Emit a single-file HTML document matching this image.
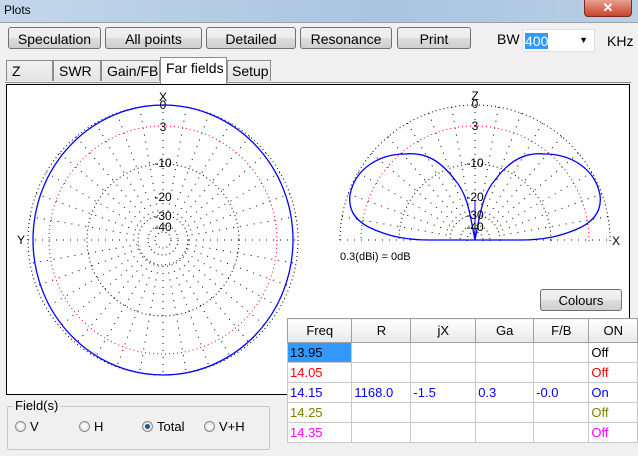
<!DOCTYPE html>
<html><head><style>
body{margin:0;width:638px;height:455px;overflow:hidden;background:#f0f0f0;font-family:"Liberation Sans",sans-serif;font-size:13px;position:relative}
.tb{position:absolute;left:0;top:0;width:638px;height:22px;background:linear-gradient(90deg,#c4d6ea,#a9c4e0 60%,#b9cfe6);}
.abs{position:absolute}
.btn{position:absolute;top:27px;height:22px;border:1px solid #707070;border-radius:3px;background:linear-gradient(#f2f2f2,#ebebeb 50%,#dddddd 50%,#cfcfcf);text-align:center;line-height:22px;font-size:14px;color:#000;box-sizing:border-box}
.tab{position:absolute;top:60px;height:21px;border:1px solid #898c95;border-bottom:none;background:linear-gradient(#f2f2f2,#e3e3e3);font-size:14px;line-height:20px;box-sizing:border-box;padding-left:5px}
table{border-collapse:collapse;position:absolute;left:287px;top:318px;background:#fff;font-size:13px}
td{border:1px solid #c8c8c8;height:20px;padding:0 0 0 2px;box-sizing:border-box}
th{border:1px solid #a0a0a0;font-weight:normal;background:linear-gradient(#fff,#e8e8e8);height:21px;font-size:13px}
.rad{position:absolute;top:421px;width:11px;height:11px;border-radius:50%;border:1px solid #8a8a8a;background:radial-gradient(#fff,#d8d8d8);box-sizing:border-box}
</style></head><body>
<div class="tb"></div>
<div class="abs" style="left:4px;top:3px;font-size:12px">Plots</div>
<div class="abs" style="left:584px;top:0;width:46px;height:16px;background:linear-gradient(#e8a090,#c8442c);border:1px solid #7a2a20;border-top:none;border-radius:0 0 4px 4px;color:#fff;text-align:center;font-weight:bold;line-height:15px">✕</div>
<div class="abs" style="left:0;top:22px;width:638px;height:433px;background:#f0f0f0;border-top:1px solid #a0a0a0"></div>
<div class="btn" style="left:8px;width:93px">Speculation</div>
<div class="btn" style="left:105px;width:97px">All points</div>
<div class="btn" style="left:206px;width:90px">Detailed</div>
<div class="btn" style="left:300px;width:92px">Resonance</div>
<div class="btn" style="left:397px;width:74px">Print</div>
<div class="abs" style="left:497px;top:31px;font-size:14px">BW</div>
<div class="abs" style="left:522px;top:29px;width:73px;height:23px;background:#fff;border:1px solid #e0e0e0;box-sizing:border-box"><span style="background:#3399ff;color:#fff;font-size:14px;position:absolute;left:2px;top:3px;line-height:16px">400</span><span style="position:absolute;right:6px;top:5px;font-size:9px">▼</span></div>
<div class="abs" style="left:607px;top:33px;font-size:14px">KHz</div>
<div class="tab" style="left:6px;width:47px">Z</div>
<div class="tab" style="left:53px;width:48px">SWR</div>
<div class="tab" style="left:101px;width:59px">Gain/FB</div>
<div class="tab" style="left:160px;top:57px;height:27px;width:67px;background:#fff;z-index:2">Far fields</div>
<div class="tab" style="left:227px;width:44px;padding-left:4px">Setup</div>
<div class="abs" style="left:5px;top:82px;width:626px;height:1px;background:#898c95"></div>
<div class="abs" style="left:6px;top:84px;width:624px;height:311px;background:#fff;border:1px solid #000;box-sizing:border-box"></div>
<svg class="abs" style="left:0;top:0" width="638" height="455">
<defs>
<g id="sp" stroke="#000" stroke-width="1" stroke-dasharray="1 6">
<line x1="-135" y1="0" x2="135" y2="0" transform="rotate(0)"/><line x1="-135" y1="0" x2="135" y2="0" transform="rotate(10)"/><line x1="-135" y1="0" x2="135" y2="0" transform="rotate(20)"/><line x1="-135" y1="0" x2="135" y2="0" transform="rotate(30)"/><line x1="-135" y1="0" x2="135" y2="0" transform="rotate(40)"/><line x1="-135" y1="0" x2="135" y2="0" transform="rotate(50)"/><line x1="-135" y1="0" x2="135" y2="0" transform="rotate(60)"/><line x1="-135" y1="0" x2="135" y2="0" transform="rotate(70)"/><line x1="-135" y1="0" x2="135" y2="0" transform="rotate(80)"/><line x1="-135" y1="0" x2="135" y2="0" transform="rotate(90)"/><line x1="-135" y1="0" x2="135" y2="0" transform="rotate(100)"/><line x1="-135" y1="0" x2="135" y2="0" transform="rotate(110)"/><line x1="-135" y1="0" x2="135" y2="0" transform="rotate(120)"/><line x1="-135" y1="0" x2="135" y2="0" transform="rotate(130)"/><line x1="-135" y1="0" x2="135" y2="0" transform="rotate(140)"/><line x1="-135" y1="0" x2="135" y2="0" transform="rotate(150)"/><line x1="-135" y1="0" x2="135" y2="0" transform="rotate(160)"/><line x1="-135" y1="0" x2="135" y2="0" transform="rotate(170)"/>
</g>
<g id="rings" fill="none" stroke-dasharray="1 3">
<circle r="25" fill="#fff" stroke="none"/>
<circle r="135" stroke="#000"/><circle r="114" stroke="#f00"/><circle r="76" stroke="#000"/><circle r="25" stroke="#000"/><circle r="15" stroke="#000"/><circle r="8" stroke="#000"/>
</g>
<clipPath id="half"><rect x="-140" y="-140" width="280" height="141"/></clipPath>
</defs>
<g transform="translate(163,240)">
<use href="#sp"/><use href="#rings"/>
<ellipse rx="130" ry="135" fill="none" stroke="#00f" stroke-width="1.3"/>
</g>
<g transform="translate(475,240)" clip-path="url(#half)">
<use href="#sp"/><use href="#rings"/>
</g>
<path d="M475,240 C470,215 468,195 455,180 C440,160 425,152 405,154 C380,154 355,168 350,195 C348,210 355,222 375,230 C390,236 405,240 430,240 L520,240 C545,240 560,236 575,230 C595,222 602,210 600,195 C595,168 570,154 545,154 C525,152 510,160 495,180 C482,195 480,215 475,240 Z" fill="none" stroke="#00f" stroke-width="1.3"/>
<line x1="475" y1="200" x2="475" y2="240" stroke="#00f"/>
<g font-family="Liberation Sans,sans-serif" font-size="12" text-anchor="middle" fill="#000">
<text x="163" y="101">X</text><text x="163" y="109">0</text><text x="163" y="131">3</text><text x="163" y="167">-10</text><text x="163" y="201">-20</text><text x="163" y="220">-30</text><text x="163" y="231">-40</text>
<text x="21" y="244">Y</text>
<text x="475" y="100">Z</text><text x="475" y="108">0</text><text x="475" y="130">3</text><text x="475" y="167">-10</text><text x="475" y="201">-20</text><text x="475" y="219">-30</text><text x="475" y="231">-40</text>
<text x="616" y="245">X</text>
<text x="340" y="260" text-anchor="start" font-size="11">0.3(dBi) = 0dB</text>
</g>
</svg>
<div class="btn" style="left:540px;top:289px;width:82px;height:22px;font-size:13px">Colours</div>
<table>
<tr><th style="width:63px">Freq</th><th style="width:57px">R</th><th style="width:64px">jX</th><th style="width:57px">Ga</th><th style="width:54px">F/B</th><th style="width:47px">ON</th></tr>
<tr><td style="background:#3399ff">13.95</td><td></td><td></td><td></td><td></td><td>Off</td></tr>
<tr style="color:#f00"><td>14.05</td><td></td><td></td><td></td><td></td><td>Off</td></tr>
<tr style="color:#00f"><td>14.15</td><td>1168.0</td><td>-1.5</td><td>0.3</td><td>-0.0</td><td>On</td></tr>
<tr style="color:#808000"><td>14.25</td><td></td><td></td><td></td><td></td><td>Off</td></tr>
<tr style="color:#f0f"><td>14.35</td><td></td><td></td><td></td><td></td><td>Off</td></tr>
</table>
<div class="abs" style="left:7px;top:406px;width:263px;height:44px;border:1px solid #c8c8c8;border-radius:2px;box-sizing:border-box"></div>
<div class="abs" style="left:13px;top:398px;background:#f0f0f0;padding:0 2px;font-size:13px">Field(s)</div>
<div class="rad" style="left:15px"></div><div class="abs" style="left:30px;top:419px;font-size:13px">V</div>
<div class="rad" style="left:79px"></div><div class="abs" style="left:94px;top:419px;font-size:13px">H</div>
<div class="rad" style="left:142px"></div><div class="abs" style="left:145px;top:424px;width:5px;height:5px;border-radius:50%;background:#1a5a8a"></div><div class="abs" style="left:157px;top:419px;font-size:13px">Total</div>
<div class="rad" style="left:204px"></div><div class="abs" style="left:219px;top:419px;font-size:13px">V+H</div>
</body></html>
